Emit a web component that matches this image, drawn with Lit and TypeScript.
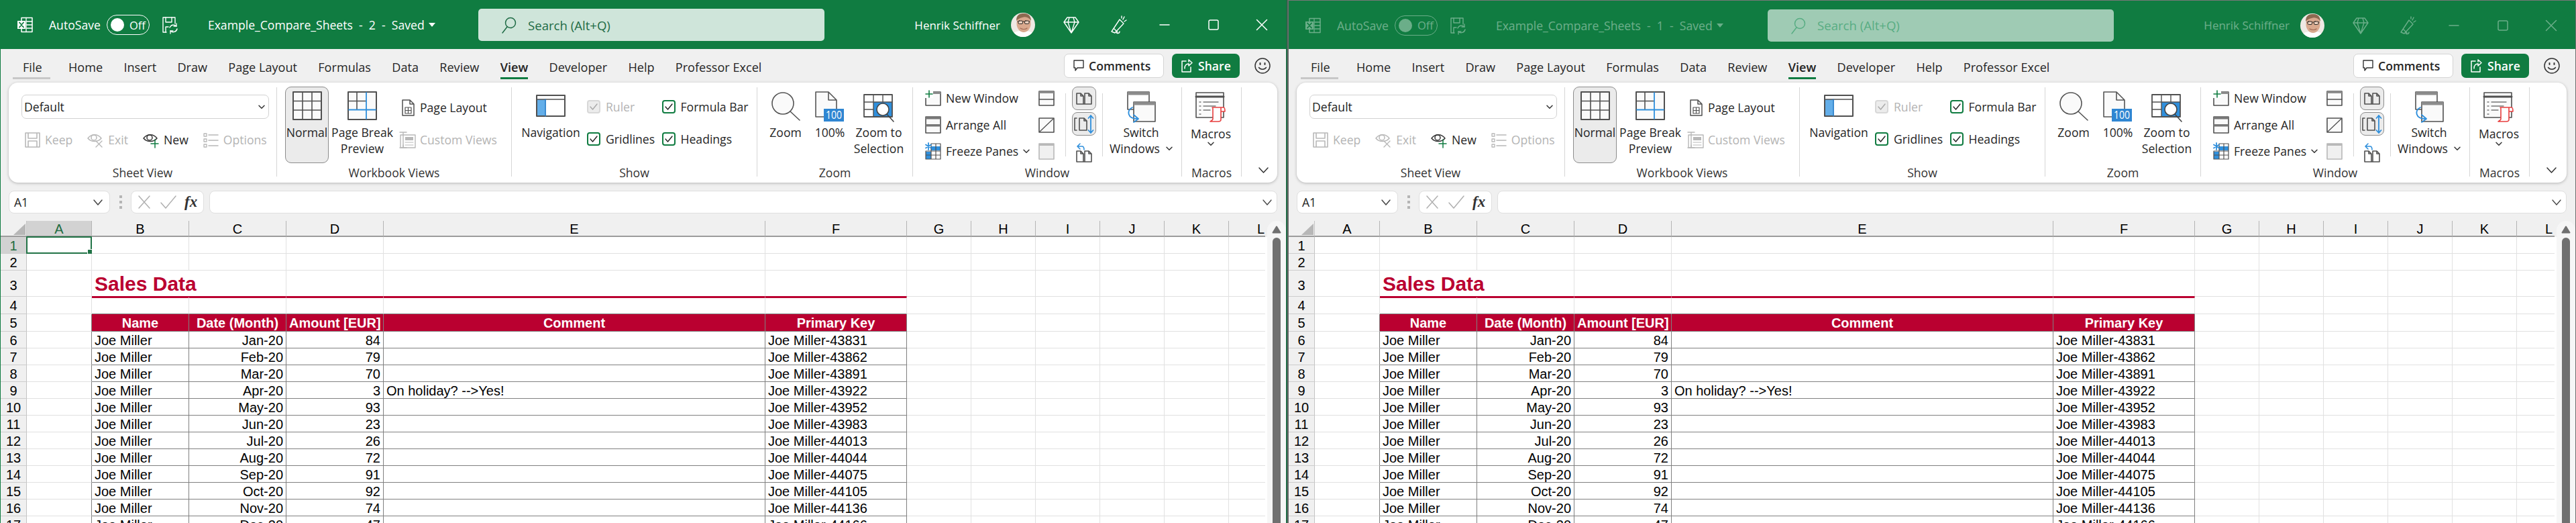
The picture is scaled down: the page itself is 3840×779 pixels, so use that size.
import { LitElement, html, css, svg } from "lit";

const ic = (w: number, h: number, body: unknown, cls = "") =>
  html`<svg class=${cls} width=${w} height=${h} viewBox="0 0 ${w} ${h}" fill="none" stroke-linecap="round" stroke-linejoin="round">${body}</svg>`;

const F = "#505050", G = "#b8b8b8", B = "#2f8fdc", LG = "#107c41";
const chev = (c = "#333") => ic(10, 7, svg`<path d="M1 1.2L5 5.2L9 1.2" stroke=${c} stroke-width="1.5"/>`, "chev");

const xlIcon = ic(24, 24, svg`<path d="M7 6V1.5H23V22.5H7V18" stroke="#fff" stroke-width="1.5"/><path d="M14 1.5V22.5M14 7H23M14 12H23M14 17H23" stroke="#fff" stroke-width="1.3"/><rect x="1" y="6" width="12" height="12" fill="#fff"/><path d="M4 8.5L10 15.5M10 8.5L4 15.5" stroke="#107c41" stroke-width="1.8"/>`);
const saveIcon = ic(24, 24, svg`<path d="M7 23H2V1H20V10" stroke="#fff" stroke-width="1.4"/><path d="M6 1V8H15V1M6 23V15H10" stroke="#fff" stroke-width="1.4"/><path d="M12 16A6 6 0 0 1 22 14M23 18A6 6 0 0 1 13 21" stroke="#fff" stroke-width="1.4"/><path d="M22 10V14H18M13 25V21H17" stroke="#fff" stroke-width="1.3"/>`);
const searchIcon = ic(24, 26, svg`<circle cx="15" cy="10" r="7.5" stroke="currentColor" stroke-width="1.5"/><path d="M10 16L3 25" stroke="currentColor" stroke-width="1.5"/>`);
const diamond = ic(24, 28, svg`<path d="M6 3H18L23 10L12 26L1 10Z M1 10H23 M9 3L7 10L12 26L17 10L15 3" stroke="#fff" stroke-width="1.4"/>`);
const mega = ic(24, 28, svg`<path d="M14 6L20 12L7 26L2 24Z M6 20L11 25" stroke="#fff" stroke-width="1.4"/><path d="M9 24C9 28 14 27 14 24M19 6L21 2M21 9L24 7M17 4L17 1" stroke="#fff" stroke-width="1.4"/>`);
const minI = ic(24, 24, svg`<path d="M5 12H19" stroke="#fff" stroke-width="1.5"/>`);
const maxI = ic(24, 24, svg`<rect x="5" y="5" width="14" height="14" rx="2" stroke="#fff" stroke-width="1.5"/>`);
const closeI = ic(24, 24, svg`<path d="M4.5 4.5L19.5 19.5M19.5 4.5L4.5 19.5" stroke="#fff" stroke-width="1.5"/>`);
const avatar = (id: string) => ic(36, 36, svg`<defs><clipPath id=${id}><circle cx="18" cy="18" r="18"/></clipPath></defs>
<g clip-path="url(#${id})"><rect width="36" height="36" fill="#efe9e4"/><path d="M0 36C2 28 10 27 18 27C26 27 34 28 36 36Z" fill="#fff"/>
<ellipse cx="19" cy="16" rx="10.5" ry="13" fill="#d9a98e"/><path d="M8 12C8 2 14 1 20 1C27 1 30 6 30 12C27 7 22 5 17 7C13 8 11 9 8 12Z" fill="#8d6a50"/>
<path d="M10 13H28" stroke="#2b2622" stroke-width="1"/><rect x="11" y="12" width="6.5" height="4.5" rx="1.5" stroke="#2b2622" fill="#ead0bf"/><rect x="20.5" y="12" width="6.5" height="4.5" rx="1.5" stroke="#2b2622" fill="#ead0bf"/>
<path d="M14 23C17 25 22 25 24 23" stroke="#a06a55" stroke-width="1.2"/></g>`);
const comment = ic(16, 20, svg`<path d="M1 2H15V13H6L3 17V13H1Z" stroke="#333" stroke-width="1.4"/>`);
const shareI = ic(18, 22, svg`<path d="M8 4H2V20H15V13" stroke="#fff" stroke-width="1.5"/><path d="M6 15C6 10 9 8 12 8V11L17 6.5L12 2V5" stroke="#fff" stroke-width="1.5"/>`);
const smile = ic(24, 24, svg`<ellipse cx="12" cy="12" rx="11" ry="11" stroke="#333" stroke-width="1.5"/><path d="M8.5 8V10M15.5 8V10" stroke="#333" stroke-width="2"/><path d="M6.5 14.5C9 18 15 18 17.5 14.5" stroke="#333" stroke-width="1.5"/>`);

const keepI = ic(23, 23, svg`<path d="M1 1H22V22H1Z M5 1V9H18V1 M5 22V13H18V22" stroke=${G} stroke-width="1.6"/>`);
const eyeBase = (c: string) => svg`<path d="M1 9C6 2 16 2 21 9C16 15 6 15 1 9Z" stroke=${c} stroke-width="1.5"/><circle cx="10" cy="8" r="4" stroke=${c} stroke-width="1.5"/>`;
const exitI = ic(24, 23, svg`${eyeBase(G)}<path d="M13 13L22 22M22 13L13 22" stroke=${G} stroke-width="1.4"/>`);
const newI = ic(24, 23, svg`${eyeBase("#333")}<path d="M18 11V23M12 17H23" stroke=${LG} stroke-width="1.5"/>`);
const optI = ic(23, 23, svg`<path d="M1 2H5V6H1ZM1 10H5V14H1ZM1 18H5V22H1Z" stroke=${G} stroke-width="1.3"/><path d="M8 4H22M8 12H22M8 20H22" stroke=${G} stroke-width="1.6"/>`);

const normalI = ic(44, 46, svg`<rect x="1" y="1" width="42" height="41" fill="#fafafa" stroke=${F} stroke-width="2"/><path d="M15 1V42M29 1V42M1 14.5H43M1 28H43" stroke=${F} stroke-width="1.6"/>`);
const pbI = ic(44, 46, svg`<rect x="1" y="1" width="42" height="41" fill="#fafafa" stroke=${F} stroke-width="2"/><path d="M14 1V27M1 14.5H28" stroke=${F} stroke-width="1.6"/><path d="M28 2V41M2 27.5H42" stroke=${B} stroke-width="1.8"/>`);
const plI = ic(24, 26, svg`<path d="M4 2H15L21 8V25H4Z M15 2V8H21" stroke=${F} stroke-width="1.5"/><path d="M8 13H17V22H8Z M12.5 13V22M8 17.5H17" stroke=${F} stroke-width="1.2"/>`);
const cvI = ic(24, 26, svg`<path d="M0 2H10M5 2V6M0 25H10M5 25V21" stroke=${G} stroke-width="1.4"/><path d="M1 6H23V25H1Z" stroke=${G} stroke-width="1.4"/><rect x="8" y="9" width="12" height="5" fill=${G}/><path d="M8 17H20M8 21H20" stroke=${G}/><path d="M5 6V25" stroke=${G} stroke-width="1.4"/>`);

const navI = ic(44, 46, svg`<rect x="1" y="12" width="14" height="25" fill="#63aee9"/><rect x="1" y="6" width="42" height="31" stroke=${F} stroke-width="2"/><path d="M1 12H43" stroke=${F} stroke-width="1.6"/><path d="M14 12V37" stroke="#2b7cc4" stroke-width="1.4"/>`);
const tick = (c: string) => ic(12, 10, svg`<path d="M1 5L4.5 9L11 1" stroke=${c} stroke-width="1.4"/>`);

const zoomI = ic(46, 46, svg`<circle cx="19" cy="18" r="16" fill="#fafafa" stroke="#555" stroke-width="1.6"/><path d="M30 30L44 43" stroke="#555" stroke-width="1.6"/>`);
const z100I = html`<svg width="44" height="46" viewBox="0 0 44 46" fill="none"><path d="M1 1H20L32 13V38H1Z M20 1V13H32" stroke="#555" stroke-width="1.6" stroke-linejoin="round" fill="#fafafa"/><rect x="13" y="26" width="30" height="19" fill="#2f86d2"/><text x="28" y="41" text-anchor="middle" textLength="24" lengthAdjust="spacingAndGlyphs" font-family="Open Sans, sans-serif" font-size="16" fill="#fff" stroke="none">100</text></svg>`;
const zsI = ic(46, 46, svg`<rect x="15" y="16" width="28" height="22" fill=${B}/><rect x="1" y="5" width="42" height="33" stroke=${F} stroke-width="1.8"/><path d="M15 5V38M29 5V16M1 16H43M1 27H15" stroke=${F} stroke-width="1.4"/><circle cx="29" cy="27" r="9" fill="#fff" stroke="#444" stroke-width="1.6"/><path d="M35 34L45 45" stroke="#444" stroke-width="1.6"/>`);

const frame = (y: number, h: number) => svg`<rect x="1" y=${y} width="22" height=${h} fill="#fafafa" stroke=${F} stroke-width="1.6"/><rect x="1" y=${y} width="22" height="3" fill="#8c8c8c"/>`;
const newWin = ic(24, 24, svg`${frame(3, 20)}<rect x="0" y="0" width="12" height="12" fill="#fff"/><path d="M6 1V11M1 6H11" stroke=${LG} stroke-width="1.6"/>`);
const arrI = ic(24, 26, svg`<rect x="1" y="1" width="22" height="24" fill="#fafafa" stroke=${F} stroke-width="1.6"/><rect x="1" y="1" width="22" height="3.5" fill="#777"/><rect x="1" y="12" width="22" height="3.5" fill="#777"/>`);
const frzI = ic(24, 26, svg`<rect x="9" y="6" width="14" height="6" fill=${B}/><rect x="1" y="14" width="8" height="11" fill=${B}/><path d="M9 2H23V25H1V13M9 2V25M16 2V25M1 13H23M1 19H23" stroke=${F} stroke-width="1.2"/><path d="M5 1V11M1 3.5L9 8.5M9 3.5L1 8.5" stroke=${B} stroke-width="1.8"/>`);
const splitI = ic(24, 24, svg`<rect x="1" y="2" width="22" height="21" fill="#fafafa" stroke=${F} stroke-width="1.6"/><rect x="1" y="2" width="22" height="3" fill="#8c8c8c"/><path d="M1 14H23" stroke=${F} stroke-width="1.6"/>`);
const hideI = ic(24, 24, svg`<rect x="1" y="2" width="22" height="21" fill="#fafafa" stroke=${F} stroke-width="1.6"/><path d="M2 22L22 3" stroke=${F} stroke-width="1.3"/>`);
const unhideI = ic(24, 26, svg`<rect x="1" y="2" width="22" height="23" fill="#f0f0f0" stroke=${G} stroke-width="1.6"/><rect x="1" y="2" width="22" height="3" fill=${G}/>`);
const docs = (y: number) => svg`<path d="M1 ${y}H7L11 ${y + 4}V${y + 16}H1Z M7 ${y}V${y + 4}H11 M13 ${y}H19L23 ${y + 4}V${y + 16}H13Z M19 ${y}V${y + 4}H23 M11 ${y + 16}H13" stroke=${F} stroke-width="1.6"/>`;
const sideI = ic(24, 18, docs(1));
const syncI = ic(30, 30, svg`<path d="M4 6H1V24H4 M8 6H15L19 10V24H8Z M15 6V10H19" stroke=${F} stroke-width="1.6"/><path d="M25 2V28M21.5 6L25 2L28.5 6M21.5 24L25 28L28.5 24" stroke=${B} stroke-width="1.8"/>`);
const resetI = ic(24, 30, svg`<path d="M6 1L2 5L6 9M2 5H9C11 5 12 6 12 10" stroke=${B} stroke-width="1.6"/>${docs(12)}`);
const switchI = ic(46, 46, svg`<rect x="3" y="1" width="32" height="26" stroke=${F} stroke-width="1.6"/><rect x="3" y="1" width="32" height="4.5" fill="#8c8c8c"/><rect x="12" y="16" width="32" height="29" fill="#fafafa" stroke=${F} stroke-width="1.6"/><rect x="12" y="16" width="32" height="4.5" fill="#8c8c8c"/><path d="M10 24C1 28 2 41 18 41M12 35L19 41L12 46" stroke=${B} stroke-width="1.9"/>`);
const macroI = ic(46, 46, svg`<rect x="1" y="2" width="41" height="37" fill="#fafafa" stroke=${F} stroke-width="1.6"/><path d="M1 8H42" stroke=${F} stroke-width="3"/><path d="M6 16H8M12 16H34M6 22H8M12 22H30M6 28H8M12 28H22M6 34H8" stroke="#777" stroke-width="1.3"/><path d="M25 24H42C44 24 44 27 44 30H38V42C38 44 36 45 34 45H22C24 44 26 43 26 41V27C26 25 26 24 25 24Z M38 24V30" stroke="#e83f3f" stroke-width="1.6" fill="#fff"/>`);

const tabs = ["Home", "Insert", "Draw", "Page Layout", "Formulas", "Data", "Review", "View", "Developer", "Help", "Professor Excel"];
const months = ["Jan", "Feb", "Mar", "Apr", "May", "Jun", "Jul", "Aug", "Sep", "Oct", "Nov", "Dec"];
const amounts = [84, 79, 70, 3, 93, 23, 26, 72, 91, 92, 74, 47];
const keys = [43831, 43862, 43891, 43922, 43952, 43983, 44013, 44044, 44075, 44105, 44136, 44166];
const cols = ["A", "B", "C", "D", "E", "F", "G", "H", "I", "J", "K", "L"];

class ExcelWindow extends LitElement {
  static properties = { name: {}, inactive: { type: Boolean, reflect: true } };
  name = "";
  inactive = false;

  static styles = css`
    :host { display: flex; flex-direction: column; box-sizing: border-box; height: 779px; overflow: hidden; background: #f0f0f0;
      border-left: 1px solid #107c41; font-family: "Open Sans", sans-serif; font-size: 17.6px; color: #262626; }
    :host(:not([inactive])) { width: 1919px; border-right: 2px solid #1f6b45; }
    :host([inactive]) { width: 1920px; border-left-color: #6d6d6d; border-right: 1px solid #6d6d6d; }
    svg { display: block; flex: none; overflow: visible; }

    .title { box-sizing: border-box; height: 73px; flex: none; background: #107c41; color: #fff; display: flex; align-items: center; padding-top: 1px; }
    :host([inactive]) .title { border-top: 1px solid #777; }
    .tl { width: 712px; flex: none; display: flex; align-items: center; padding-left: 24px; box-sizing: border-box; }
    :host([inactive]) .tl { width: 714px; }
    :host([inactive]) .tl > *, :host([inactive]) .tr > :not(.avatar) { opacity: .38; }
    .autosave { margin-left: 24px; }
    .toggle { margin-left: 9px; width: 64px; height: 30px; box-sizing: border-box; border: 1.5px solid #fff; border-radius: 15px; display: flex; align-items: center; padding-left: 5px; gap: 8px; font-size: 16.5px; }
    .knob { width: 20px; height: 20px; border-radius: 50%; background: #fff; }
    .saveic { margin-left: 18px; }
    .doc { margin-left: 45px; white-space: pre; }
    .caret { margin-left: 6px; width: 0; height: 0; border: 5px solid transparent; border-top: 6px solid #fff; border-bottom: 0; }
    .search { width: 516px; height: 48px; flex: none; box-sizing: border-box; border-radius: 5px; background: #cfe5da; color: #1e6b45; display: flex; align-items: center; padding-left: 33px; gap: 17px; font-size: 18.6px; }
    :host([inactive]) .search { background: #9fcbb4; color: #58ad83; }
    .tr { margin-left: auto; display: flex; align-items: center; padding-right: 24px; }
    .who { font-size: 17px; }
    .avatar { margin-left: 16px; margin-right: 42px; }
    .tr .m46 { margin-left: 46px; } .tr .m45 { margin-left: 45px; } .tr .m49 { margin-left: 49px; } .tr .m48 { margin-left: 48px; }

    .tabs { height: 50px; flex: none; box-sizing: border-box; display: flex; gap: 31.3px; padding-left: 18px; padding-right: 23px; font-size: 18.1px; }
    .tab { box-sizing: border-box; height: 45px; padding-top: 12px; line-height: 30px; white-space: nowrap; border-bottom: 3px solid transparent; }
    .tab.file { padding: 12px 12px 0 15px; margin-right: -4px; border-bottom-color: #c8c8c8; }
    .tab.on { border-bottom-color: #107c41; font-weight: 600; color: #222; }
    .acts { margin-left: auto; display: flex; align-items: flex-start; padding-top: 7px; font-size: 17.6px; }
    .cbtn { box-sizing: border-box; width: 149px; height: 36px; display: flex; align-items: center; padding-left: 13px; gap: 7px; background: #fff; border: 1px solid #d4d4d4; border-radius: 7px; font-weight: 600; }
    .sbtn { box-sizing: border-box; width: 101px; height: 36px; margin-left: 12px; display: flex; align-items: center; padding-left: 13px; gap: 8px; background: #107c41; color: #fff; border-radius: 7px; font-weight: 600; }
    .smile { margin-left: 22px; margin-top: 6px; }

    .ribbon { box-sizing: border-box; height: 149px; flex: none; margin: 0 13px 0 12px; padding: 7px 0 9px; display: flex; background: #fff; border-radius: 14px; box-shadow: 0 1px 4px rgba(0,0,0,.25); }
    .group { flex: none; display: flex; flex-direction: column; height: 133px; border-right: 1px solid #d6d6d6; box-sizing: border-box; }
    .g1 { width: 400px; } .g2 { width: 350px; } .g3 { width: 366px; } .g4 { width: 232px; } .g5 { width: 401px; } .g6 { width: 89px; }
    .gb { height: 115px; flex: none; display: flex; box-sizing: border-box; }
    .gl { height: 18px; line-height: 24px; text-align: center; white-space: nowrap; color: #333; }
    .rest { flex: 1; padding: 119px 0 0 25px; }

    .sheetb { flex-direction: column; padding: 11px 0 0 19px; }
    .dd { box-sizing: border-box; width: 369px; height: 36px; background: #fff; border: 1px solid #d2d2d2; border-radius: 7px; display: flex; align-items: center; padding: 0 5px 0 3px; justify-content: space-between; color: #222; }
    .toolrow { display: flex; align-items: center; height: 34px; margin-top: 14px; padding-left: 5px; gap: 22px; }
    .tool { display: flex; align-items: center; gap: 7px; white-space: nowrap; }
    .off { color: #b4b4b4; }

    .big { flex: none; display: flex; flex-direction: column; align-items: center; box-sizing: border-box; padding-top: 6px; line-height: 24px; text-align: center; white-space: nowrap; }
    .big .ico { height: 46px; margin-bottom: 3px; }
    .big .line { display: flex; align-items: center; gap: 9px; }
    .normal { width: 65px; height: 114px; margin: -1px 0 0 12px; padding-top: 6px; background: #ebebeb; border: 1px solid #8c8c8c; border-radius: 9px; }
    .pb { width: 80px; margin-left: 10px; }
    .smallcol { display: flex; flex-direction: column; gap: 20px; padding-top: 16px; margin-left: 16px; }
    .smallcol .tool { height: 28px; gap: 6px; }
    .nav { width: 90px; margin-left: 13px; }
    .checks { display: grid; grid-template-columns: 111.5px auto; grid-auto-rows: 28px; row-gap: 20px; padding-top: 15px; margin-left: 9px; }
    .chk { display: flex; align-items: center; gap: 8px; white-space: nowrap; }
    .box { box-sizing: border-box; width: 20px; height: 20px; border: 2px solid #107c41; border-radius: 4px; display: flex; align-items: center; justify-content: center; background: #fff; }
    .box.dis { border-color: #d8d8d8; background: #ececec; }
    .zb { padding-left: 12px; gap: 6px; }
    .z1 { width: 60px; } .z3 { width: 74px; }
    .wb { padding-left: 18px; }
    .wcol { display: grid; grid-auto-rows: 28px; row-gap: 11.5px; padding-top: 2px; }
    .wcol1 { width: 169px; }
    .vsep { width: 1px; height: 94px; margin: 9px 0 0 16px; background: #d6d6d6; flex: none; }
    .vsep.b { margin-left: 9px; }
    .wcol3 { width: 36px; margin-left: 9px; display: flex; flex-direction: column; align-items: center; gap: 3px; margin-top: -1px; }
    .tbtn { box-sizing: border-box; width: 36px; height: 36px; border: 1px solid #8c8c8c; border-radius: 8px; background: #ebebeb; display: flex; align-items: center; justify-content: center; }
    .tplain { height: 36px; display: flex; align-items: center; justify-content: center; padding-top: 5px; }
    .sw { width: 90px; margin-left: 12px; }
    .mc { width: 80px; margin-left: 3px; }
    .mc .ico { margin-bottom: 5px; }

    .fbar { height: 57px; flex: none; box-sizing: border-box; padding: 12px 13px 11px 12px; display: flex; align-items: stretch; }
    .fb { background: #fff; border: 1px solid #dfdfdf; border-radius: 8px; box-sizing: border-box; display: flex; align-items: center; }
    .name { width: 151px; padding: 0 10px 0 7px; justify-content: space-between; }
    .grip { width: 4px; margin: 0 13px 0 14px; display: flex; flex-direction: column; justify-content: center; gap: 4px; }
    .grip i { display: block; width: 4px; height: 4px; background: #b5b5b5; }
    .fx { width: 109px; padding-left: 9px; gap: 14px; margin-right: 8px; }
    .fxt { font-family: "Liberation Serif", serif; font-style: italic; font-weight: 700; font-size: 23px; color: #333; margin-left: -2px; }
    .formula { flex: 1; justify-content: flex-end; padding-right: 7px; }

    .sheetwrap { flex: 1; min-height: 0; display: flex; background: #fff; }
    .sheet { flex: 1; min-width: 0; overflow: hidden; }
    .grid { display: grid; grid-template-columns: 39px 97px 145px 145px 145px 569px 211px repeat(6, 96px);
      grid-template-rows: 24px 25px 25px 39px 26px 26px repeat(12, 25px); font-family: "Liberation Sans", Arial, sans-serif; font-size: 20px; color: #000; }
    .corner { background: #f0f0f0; border-bottom: 2px solid #9c9c9c; border-right: 1px solid #c4c4c4; box-sizing: border-box; padding: 4px 0 0 19px; }
    .ch { box-sizing: border-box; background: #f0f0f0; border-bottom: 2px solid #9c9c9c; border-right: 1px solid #b4b4b4; text-align: center; line-height: 24px; }
    .ch.sel { background: #d2d2d2; color: #1f6b41; }
    .rh { box-sizing: border-box; background: #f0f0f0; border-bottom: 1px solid #cdcdcd; border-right: 1px solid #c4c4c4; text-align: center; line-height: 25px; padding-top: 1px; }
    .rh.tall { padding-top: 10px; }
    .rh.sel { background: #d2d2d2; color: #1f6b41; }
    .c { box-sizing: border-box; border-right: 1px solid #e1e1e1; border-bottom: 1px solid #e1e1e1; padding: 1px 4px 0 4px; line-height: 25px; white-space: nowrap; position: relative; min-width: 0; }
    .r { text-align: right; }
    .dk-r { border-right-color: #808080; }
    .dk-b { border-bottom-color: #808080; }
    .hd { background: #ba0030; color: #fff; font-weight: 700; text-align: center; border-right-color: #808080; border-bottom-color: #808080; }
    .titlec { border-right: 0; font-size: 30px; font-weight: 700; color: #ba0030; line-height: 38px; padding-left: 4px; }
    .lnb { border-bottom-color: #ba0030; }
    .lnt { border-top: 2px solid #ba0030; }
    .cursor { position: absolute; inset: -1px; border: 2px solid #217346; pointer-events: none; }
    .handle { position: absolute; right: -3px; bottom: -3px; width: 6px; height: 6px; background: #217346; border: 1px solid #fff; }

    .vbar { width: 31px; flex: none; padding-left: 3px; box-sizing: border-box; background: linear-gradient(#f0f0f0 24px, #fff 24px); }
    .track { height: 100%; border-radius: 14px 14px 0 0; background: #f6f6f6; display: flex; flex-direction: column; align-items: center; padding-top: 7px; box-sizing: border-box; gap: 6px; }
    .thumb { width: 12px; flex: 1; background: #707070; border-radius: 6px 6px 0 0; }
  `;

  private rows() {
    const out: unknown[] = [];
    const s = !this.inactive;
    out.push(html`<div class="corner">${ic(18, 17, svg`<path d="M18 0V17H0Z" fill="#b7b7b7"/>`)}</div>`);
    cols.forEach((c, i) => out.push(html`<div class="ch ${s && i === 0 ? "sel" : ""}">${c}</div>`));

    const rest = (n: number) => Array.from({ length: n }, () => html`<div class="c"></div>`);
    for (let r = 1; r <= 17; r++) {
      out.push(html`<div class="rh ${s && r === 1 ? "sel" : ""} ${r === 3 ? "tall" : ""}">${r}</div>`);
      if (r === 1) {
        out.push(html`<div class="c">${s ? html`<div class="cursor"><div class="handle"></div></div>` : ""}</div>`);
        out.push(...rest(11));
      } else if (r === 2) {
        out.push(...rest(12));
      } else if (r === 3) {
        out.push(html`<div class="c"></div><div class="c titlec lnb">Sales Data</div>`);
        out.push(...[0, 1, 2, 3].map(() => html`<div class="c lnb"></div>`));
        out.push(...rest(6));
      } else if (r === 4) {
        out.push(html`<div class="c"></div>`);
        out.push(...[0, 1, 2, 3, 4].map(() => html`<div class="c lnt dk-b"></div>`));
        out.push(...rest(6));
      } else if (r === 5) {
        out.push(html`<div class="c dk-r"></div>`);
        out.push(...["Name", "Date (Month)", "Amount [EUR]", "Comment", "Primary Key"].map((t) => html`<div class="c hd">${t}</div>`));
        out.push(...rest(6));
      } else {
        const i = r - 6;
        out.push(html`<div class="c dk-r"></div>`);
        out.push(html`<div class="c dk-r dk-b">Joe Miller</div>`);
        out.push(html`<div class="c dk-r dk-b r">${months[i]}-20</div>`);
        out.push(html`<div class="c dk-r dk-b r">${amounts[i]}</div>`);
        out.push(html`<div class="c dk-r dk-b">${i === 3 ? "On holiday? -->Yes!" : ""}</div>`);
        out.push(html`<div class="c dk-r dk-b">Joe Miller-${keys[i]}</div>`);
        out.push(...rest(6));
      }
    }
    return out;
  }

  render() {
    return html`
      <div class="title">
        <div class="tl">
          ${xlIcon}
          <span class="autosave">AutoSave</span>
          <div class="toggle"><div class="knob"></div><span>Off</span></div>
          <div class="saveic">${saveIcon}</div>
          <span class="doc">${this.name}  -  Saved</span>
          <div class="caret"></div>
        </div>
        <div class="search">${searchIcon}<span>Search (Alt+Q)</span></div>
        <div class="tr">
          <span class="who">Henrik Schiffner</span>
          <div class="avatar">${avatar(this.inactive ? "av2" : "av1")}</div>
          ${diamond}
          <div class="m46">${mega}</div>
          <div class="m45">${minI}</div>
          <div class="m49">${maxI}</div>
          <div class="m48">${closeI}</div>
        </div>
      </div>

      <div class="tabs">
        <div class="tab file">File</div>
        ${tabs.map((t) => html`<div class="tab ${t === "View" ? "on" : ""}">${t}</div>`)}
        <div class="acts">
          <div class="cbtn">${comment}<span>Comments</span></div>
          <div class="sbtn">${shareI}<span>Share</span></div>
          <div class="smile">${smile}</div>
        </div>
      </div>

      <div class="ribbon">
        <div class="group g1">
          <div class="gb sheetb">
            <div class="dd"><span>Default</span>${chev()}</div>
            <div class="toolrow">
              <div class="tool off">${keepI}Keep</div>
              <div class="tool off">${exitI}Exit</div>
              <div class="tool">${newI}New</div>
              <div class="tool off">${optI}Options</div>
            </div>
          </div>
          <div class="gl">Sheet View</div>
        </div>
        <div class="group g2">
          <div class="gb">
            <div class="big normal"><div class="ico">${normalI}</div>Normal</div>
            <div class="big pb"><div class="ico">${pbI}</div>Page Break<br />Preview</div>
            <div class="smallcol">
              <div class="tool"><div>${plI}</div>Page Layout</div>
              <div class="tool off">${cvI}Custom Views</div>
            </div>
          </div>
          <div class="gl">Workbook Views</div>
        </div>
        <div class="group g3">
          <div class="gb">
            <div class="big nav"><div class="ico">${navI}</div>Navigation</div>
            <div class="checks">
              <div class="chk off"><div class="box dis">${tick("#a8a8a8")}</div>Ruler</div>
              <div class="chk"><div class="box">${tick("#222")}</div>Formula Bar</div>
              <div class="chk"><div class="box">${tick("#222")}</div>Gridlines</div>
              <div class="chk"><div class="box">${tick("#222")}</div>Headings</div>
            </div>
          </div>
          <div class="gl">Show</div>
        </div>
        <div class="group g4">
          <div class="gb zb">
            <div class="big z1"><div class="ico">${zoomI}</div>Zoom</div>
            <div class="big z1"><div class="ico">${z100I}</div>100%</div>
            <div class="big z3"><div class="ico">${zsI}</div>Zoom to<br />Selection</div>
          </div>
          <div class="gl">Zoom</div>
        </div>
        <div class="group g5">
          <div class="gb wb">
            <div class="wcol wcol1">
              <div class="tool">${newWin}New Window</div>
              <div class="tool">${arrI}Arrange All</div>
              <div class="tool">${frzI}Freeze Panes ${chev()}</div>
            </div>
            <div class="wcol">
              <div class="tool">${splitI}</div>
              <div class="tool">${hideI}</div>
              <div class="tool">${unhideI}</div>
            </div>
            <div class="vsep"></div>
            <div class="wcol3">
              <div class="tbtn">${sideI}</div>
              <div class="tbtn">${syncI}</div>
              <div class="tplain">${resetI}</div>
            </div>
            <div class="vsep b"></div>
            <div class="big sw"><div class="ico">${switchI}</div>Switch<div class="line">Windows ${chev()}</div></div>
          </div>
          <div class="gl">Window</div>
        </div>
        <div class="group g6">
          <div class="gb">
            <div class="big mc"><div class="ico">${macroI}</div>Macros<div class="line">${chev()}</div></div>
          </div>
          <div class="gl">Macros</div>
        </div>
        <div class="rest">${ic(15, 9, svg`<path d="M1 1L7.5 8L14 1" stroke="#333" stroke-width="1.5"/>`)}</div>
      </div>

      <div class="fbar">
        <div class="fb name"><span>A1</span>${ic(14, 9, svg`<path d="M1 1L7 8L13 1" stroke="#444" stroke-width="1.5"/>`)}</div>
        <div class="grip"><i></i><i></i><i></i></div>
        <div class="fb fx">
          ${ic(20, 22, svg`<path d="M2 2L18 20M18 2L2 20" stroke="#b0b0b0" stroke-width="1.5"/>`)}
          ${ic(24, 20, svg`<path d="M1 11L8 19L23 1" stroke="#b0b0b0" stroke-width="1.5"/>`)}
          <span class="fxt">fx</span>
        </div>
        <div class="fb formula">${ic(14, 9, svg`<path d="M1 1L7 8L13 1" stroke="#444" stroke-width="1.3"/>`)}</div>
      </div>

      <div class="sheetwrap">
        <div class="sheet"><div class="grid">${this.rows()}</div></div>
        <div class="vbar"><div class="track">
          ${ic(14, 12, svg`<path d="M7 1.5L12.5 10.5H1.5Z" fill="#707070" stroke="#707070" stroke-width="2"/>`)}
          <div class="thumb"></div>
        </div></div>
      </div>
    `;
  }
}
customElements.define("excel-window", ExcelWindow);

class AppRoot extends LitElement {
  static styles = css`
    :host { display: flex; width: 3840px; height: 779px; overflow: hidden; background: #666; gap: 1px; }
  `;
  render() {
    return html`
      <excel-window name="Example_Compare_Sheets  -  2"></excel-window>
      <excel-window name="Example_Compare_Sheets  -  1" inactive></excel-window>
    `;
  }
}
customElements.define("app-root", AppRoot);
